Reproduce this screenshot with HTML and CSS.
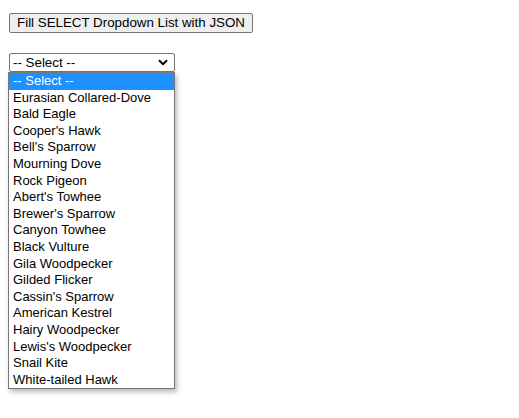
FILE: index.html
```html
<!DOCTYPE html>
<html>
<head>
<meta charset="utf-8">
<link rel="stylesheet" href="styles.css">
</head>
<body>
<div class="page">
  <button class="fill-btn">Fill SELECT Dropdown List with JSON</button>
  <div class="select-wrap">
    <div class="select-box">
      <span class="select-text">-- Select --</span>
      <svg class="chev" width="10" height="7" viewBox="0 0 10 7"><path d="M1 1.2 L5 5.2 L9 1.2" fill="none" stroke="#000" stroke-width="2"/></svg>
    </div>
    <ul class="dropdown">
      <li class="opt active">-- Select --</li>
      <li class="opt">Eurasian Collared-Dove</li>
      <li class="opt">Bald Eagle</li>
      <li class="opt">Cooper's Hawk</li>
      <li class="opt">Bell's Sparrow</li>
      <li class="opt">Mourning Dove</li>
      <li class="opt">Rock Pigeon</li>
      <li class="opt">Abert's Towhee</li>
      <li class="opt">Brewer's Sparrow</li>
      <li class="opt">Canyon Towhee</li>
      <li class="opt">Black Vulture</li>
      <li class="opt">Gila Woodpecker</li>
      <li class="opt">Gilded Flicker</li>
      <li class="opt">Cassin's Sparrow</li>
      <li class="opt">American Kestrel</li>
      <li class="opt">Hairy Woodpecker</li>
      <li class="opt">Lewis's Woodpecker</li>
      <li class="opt">Snail Kite</li>
      <li class="opt">White-tailed Hawk</li>
    </ul>
  </div>
</div>
</body>
</html>
```
FILE: styles.css
```css
html, body {
  margin: 0;
  padding: 0;
  background: #fff;
}
.page {
  padding: 13px 9px;
  font-family: "Liberation Sans", Arial, sans-serif;
  font-size: 13.333px;
  color: #000;
  display: flex;
  flex-direction: column;
  align-items: flex-start;
  gap: 20px;
}
.fill-btn {
  font-family: "Liberation Sans", Arial, sans-serif;
  font-size: 13.333px;
  height: 20px;
  width: 244px;
  padding: 0 6px;
  margin: 0;
  background: #efefef;
  border: 1px solid #767676;
  border-radius: 2px;
  color: #000;
  line-height: 18px;
}
.select-wrap {
  display: flex;
  flex-direction: column;
  align-items: flex-start;
}
.select-box {
  box-sizing: border-box;
  width: 166px;
  height: 19px;
  border: 1px solid #767676;
  border-radius: 2px;
  background: #fff;
  display: flex;
  align-items: center;
  justify-content: space-between;
  padding: 0 6px 0 3px;
  line-height: 17px;
}
.chev {
  display: block;
}
.dropdown {
  box-sizing: border-box;
  width: 167px;
  margin: 0 0 0 -1px;
  padding: 0;
  list-style: none;
  border: 1px solid #767676;
  background: #fff;
  box-shadow: 2px 3px 5px rgba(0,0,0,0.28);
  font-size: 13px;
}
.opt {
  height: 16.6px;
  line-height: 16.6px;
  padding-left: 4px;
  white-space: nowrap;
}
.opt.active {
  background: #1e90ff;
  color: #fff;
}
```
